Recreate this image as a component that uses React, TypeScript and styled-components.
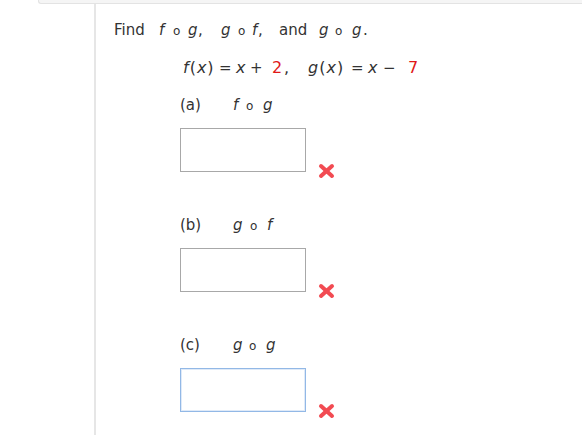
import React from "react";
import styled, { createGlobalStyle } from "styled-components";

const Global = createGlobalStyle`
  html, body { margin: 0; padding: 0; background: #fff; }
  body { font-family: "DejaVu Sans", Verdana, sans-serif; color: #333; }
`;

const TopBar = styled.div`
  margin-left: 38px;
  height: 3px;
  background: #f5f5f5;
  border: 1px solid #e3e3e3;
  border-top: none;
  border-right: none;
  border-bottom-left-radius: 3px;
`;

const Main = styled.div`
  margin-left: 94px;
  border-left: 2px solid #e6e6e6;
  height: 431px;
  box-sizing: border-box;
  padding: 14px 0 0 18px;
  font-size: 15px;
`;

const Line = styled.div<{ $indent?: number; $top?: number; $size?: number }>`
  display: flex;
  align-items: baseline;
  height: 24px;
  margin-left: ${(p) => p.$indent ?? 0}px;
  margin-top: ${(p) => p.$top ?? 0}px;
  font-size: ${(p) => p.$size ?? 15}px;
  line-height: 24px;
  white-space: pre;
`;

/* a token cell of the typeset expression: w is its advance */
const Cell = styled.span<{ $w?: number; $it?: boolean; $red?: boolean; $op?: boolean; $ls?: number }>`
  display: inline-block;
  flex: none;
  width: ${(p) => (p.$w ? `${p.$w}px` : "auto")};
  font-style: ${(p) => (p.$it ? "italic" : "normal")};
  font-size: ${(p) => (p.$op ? "15px" : "inherit")};
  letter-spacing: ${(p) => p.$ls ?? 0}px;
  color: ${(p) => (p.$red ? "#e01818" : "inherit")};
`;

const Up = styled.span`
  font-style: normal;
`;

const Ring = styled.span<{ $w: number }>`
  display: inline-block;
  flex: none;
  width: ${(p) => p.$w}px;
  font-size: 12px;
  color: #333;
`;

const Part = styled.div<{ $top: number }>`
  margin-left: 66px;
  margin-top: ${(p) => p.$top}px;
`;

const Row = styled.div`
  display: flex;
  align-items: flex-start;
  margin-top: 11px;
`;

const Box = styled.div<{ $active?: boolean }>`
  width: 126px;
  height: 44px;
  box-sizing: border-box;
  border: 1px solid ${(p) => (p.$active ? "#92b8e6" : "#a8a8a8")};
  box-shadow: ${(p) => (p.$active ? "inset 0 0 0 1px #dfeaf8" : "none")};
  background: #fff;
`;

const Mark = styled.svg`
  margin-left: 12px;
  margin-top: 35px;
  width: 17px;
  height: 18px;
`;

const Cross = () => (
  <Mark viewBox="0 0 17 18">
    <g stroke="#f24b52" strokeWidth="4" strokeLinecap="round">
      <line x1="3" y1="3" x2="14" y2="13" />
      <line x1="14" y1="3" x2="3" y2="13" />
    </g>
  </Mark>
);

type Comp = { l: string; a: string; b: string; wa: number; wo: number; top: number };

const parts: Comp[] = [
  { l: "(a)", a: "f", b: "g", wa: 13, wo: 17, top: 13 },
  { l: "(b)", a: "g", b: "f", wa: 17, wo: 17, top: 32 },
  { l: "(c)", a: "g", b: "g", wa: 16, wo: 17, top: 32 },
];

export default function App() {
  return (
    <>
      <Global />
      <TopBar />
      <Main>
        <Line>
          <Cell $w={45}>Find</Cell>
          <Cell $w={14} $it>f</Cell>
          <Ring $w={15}>o</Ring>
          <Cell $w={10} $it>g</Cell>
          <Cell $w={23}>,</Cell>
          <Cell $w={17} $it>g</Cell>
          <Ring $w={14}>o</Ring>
          <Cell $w={6} $it>f</Cell>
          <Cell $w={21}>,</Cell>
          <Cell $w={40}>and</Cell>
          <Cell $w={16} $it>g</Cell>
          <Ring $w={17}>o</Ring>
          <Cell $w={11} $it>g</Cell>
          <Cell>.</Cell>
        </Line>
        <Line $indent={69} $top={14} $size={16}>
          <Cell $w={36} $it $ls={1}>
            f<Up>(</Up>x<Up>)</Up>
          </Cell>
          <Cell $w={17} $op>=</Cell>
          <Cell $w={14} $it>x</Cell>
          <Cell $w={22} $op>+</Cell>
          <Cell $w={12} $red>2</Cell>
          <Cell $w={24}>,</Cell>
          <Cell $w={43} $it $ls={1}>
            g<Up>(</Up>x<Up>)</Up>
          </Cell>
          <Cell $w={17} $op>=</Cell>
          <Cell $w={15} $it>x</Cell>
          <Cell $w={25} $op>−</Cell>
          <Cell $red>7</Cell>
        </Line>
        {parts.map((p, i) => (
          <Part key={i} $top={p.top}>
            <Line>
              <Cell $w={53}>{p.l}</Cell>
              <Cell $w={p.wa} $it>{p.a}</Cell>
              <Ring $w={p.wo}>o</Ring>
              <Cell $it>{p.b}</Cell>
            </Line>
            <Row>
              <Box $active={i === 2} />
              <Cross />
            </Row>
          </Part>
        ))}
      </Main>
    </>
  );
}
